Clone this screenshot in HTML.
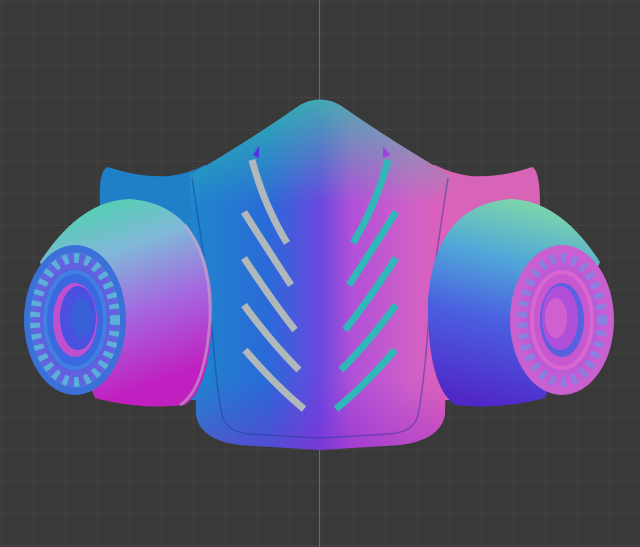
<!DOCTYPE html>
<html><head><style>html,body{margin:0;padding:0;background:#393939;}svg{display:block}</style></head><body>
<svg width="640" height="547" viewBox="0 0 640 547" xmlns="http://www.w3.org/2000/svg">
<defs>
<pattern id="grid" width="32" height="32" patternUnits="userSpaceOnUse" x="1" y="1">
<path d="M0 0H32M0 0V32" stroke="#464646" stroke-width="1.2" fill="none"/>
</pattern>
<linearGradient id="cartL" x1="0" y1="0" x2="0.3" y2="1">
<stop offset="0" stop-color="#3fd9a0"/><stop offset="0.35" stop-color="#80b8d8"/><stop offset="0.65" stop-color="#a468e0"/><stop offset="1" stop-color="#c020c0"/>
</linearGradient>
<linearGradient id="cartR" x1="0.6" y1="0" x2="0.4" y2="1">
<stop offset="0" stop-color="#80d8a8"/><stop offset="0.3" stop-color="#50a8d8"/><stop offset="0.6" stop-color="#4a60e0"/><stop offset="1" stop-color="#5028c8"/>
</linearGradient>
<linearGradient id="body" x1="0" y1="0" x2="1" y2="0">
<stop offset="0" stop-color="#1f86cc"/><stop offset="0.3" stop-color="#2a6ad8"/><stop offset="0.5" stop-color="#6a48e0"/><stop offset="0.62" stop-color="#b050d8"/><stop offset="0.85" stop-color="#d060c8"/><stop offset="1" stop-color="#e060b8"/>
</linearGradient>
<linearGradient id="bodyV" x1="0" y1="0" x2="0" y2="1">
<stop offset="0" stop-color="#30d0a0" stop-opacity="0.7"/><stop offset="0.3" stop-color="#30d0a0" stop-opacity="0"/><stop offset="0.8" stop-color="#8020d0" stop-opacity="0"/><stop offset="1" stop-color="#9020c8" stop-opacity="0.4"/>
</linearGradient>
<radialGradient id="faceL" cx="0.5" cy="0.5" r="0.55">
<stop offset="0" stop-color="#3a5ae0"/><stop offset="0.5" stop-color="#4a60e0"/><stop offset="0.8" stop-color="#6a60e0"/><stop offset="1" stop-color="#3a80d8"/>
</radialGradient>
<radialGradient id="faceR" cx="0.5" cy="0.5" r="0.55">
<stop offset="0" stop-color="#c050d0"/><stop offset="0.6" stop-color="#b858d8"/><stop offset="1" stop-color="#d060d0"/>
</radialGradient>
</defs>
<rect width="640" height="547" fill="#393939"/>
<rect width="640" height="547" fill="url(#grid)"/>
<line x1="319.5" y1="0" x2="319.5" y2="547" stroke="#4a6ea0" stroke-width="1"/>

<!-- wings -->
<path d="M100 205 Q98 170 108 167 Q140 178 170 176 Q190 173 205 165 L250 172 L250 400 L120 400 Z" fill="#1f80c8"/>
<path d="M540 205 Q540 170 532 167 Q500 178 470 176 Q450 173 435 165 L390 172 L390 400 L520 400 Z" fill="#d864b8"/>

<!-- main body -->
<path d="M190 175 Q250 140 300 105 Q320 94 340 105 Q390 140 450 175 L445 415 Q440 440 400 445 L320 450 L240 445 Q200 440 196 415 Z" fill="url(#body)"/>
<path d="M190 175 Q250 140 300 105 Q320 94 340 105 Q390 140 450 175 L445 415 Q440 440 400 445 L320 450 L240 445 Q200 440 196 415 Z" fill="url(#bodyV)"/>
<path d="M192 178 Q200 230 210 300 Q215 380 222 415 Q226 432 250 434 L320 438 L390 434 Q414 432 418 415 Q425 380 430 300 Q440 230 448 178" fill="none" stroke="#1a3a90" stroke-opacity="0.45" stroke-width="1.5"/>

<!-- slots -->
<g stroke-linecap="butt" fill="none">
<path d="M252 160 Q264 205 287 243" stroke="#b0b8bc" stroke-width="7"/>
<path d="M244 212 Q268 250 291 285" stroke="#b0b8bc" stroke-width="7"/>
<path d="M244 258 Q270 298 295 330" stroke="#b0b8bc" stroke-width="7"/>
<path d="M244 305 Q272 343 299 370" stroke="#b0b8bc" stroke-width="7"/>
<path d="M245 350 Q275 385 304 409" stroke="#b0b8bc" stroke-width="7"/>
<path d="M388 160 Q376 205 353 243" stroke="#30b8b8" stroke-width="7"/>
<path d="M396 212 Q372 250 349 285" stroke="#30b8b8" stroke-width="7"/>
<path d="M396 258 Q370 298 345 330" stroke="#30b8b8" stroke-width="7"/>
<path d="M396 305 Q368 343 341 370" stroke="#30b8b8" stroke-width="7"/>
<path d="M395 350 Q365 385 336 409" stroke="#30b8b8" stroke-width="7"/>
</g>
<path d="M253 155 L259 146 L259 158 Z" fill="#5030e0"/>
<path d="M383 146 L390 155 L383 158 Z" fill="#a040e0"/>

<!-- left cartridge -->
<path d="M40 262 Q80 200 130 199 Q205 205 212 300 Q213 385 185 405 Q140 410 95 398 Z" fill="url(#cartL)"/>
<path d="M185 225 Q212 260 210 320 Q205 390 180 405" fill="none" stroke="#c8a8c8" stroke-width="3" opacity="0.6"/>
<ellipse cx="75" cy="320" rx="51" ry="75" fill="#3a70d8"/>
<ellipse cx="75" cy="320" rx="45" ry="68" fill="url(#faceL)"/>
<ellipse cx="75" cy="320" rx="40" ry="62" fill="none" stroke="#5ab0d8" stroke-width="10" stroke-dasharray="5 6"/>
<ellipse cx="75" cy="320" rx="30" ry="48" fill="#3a68e0" stroke="#4080e0" stroke-width="4"/>
<ellipse cx="75" cy="320" rx="22" ry="37" fill="#c050d0"/>
<ellipse cx="78" cy="318" rx="18" ry="32" fill="#4a50e0"/>
<ellipse cx="82" cy="318" rx="11" ry="20" fill="#3a60d8"/>

<!-- right cartridge -->
<path d="M600 262 Q560 200 510 199 Q435 205 428 300 Q427 385 455 405 Q500 410 545 398 Z" fill="url(#cartR)"/>
<ellipse cx="562" cy="320" rx="52" ry="75" fill="#c860d0"/>
<ellipse cx="562" cy="320" rx="45" ry="68" fill="url(#faceR)"/>
<ellipse cx="562" cy="320" rx="40" ry="62" fill="none" stroke="#8a80e0" stroke-width="10" stroke-dasharray="5 6"/>
<ellipse cx="562" cy="320" rx="30" ry="48" fill="#c858d0" stroke="#d868d0" stroke-width="4"/>
<ellipse cx="562" cy="320" rx="22" ry="37" fill="#5a60e0"/>
<ellipse cx="560" cy="318" rx="18" ry="32" fill="#b050d8"/>
<ellipse cx="556" cy="318" rx="11" ry="20" fill="#d060d0"/>
</svg>
</body></html>
